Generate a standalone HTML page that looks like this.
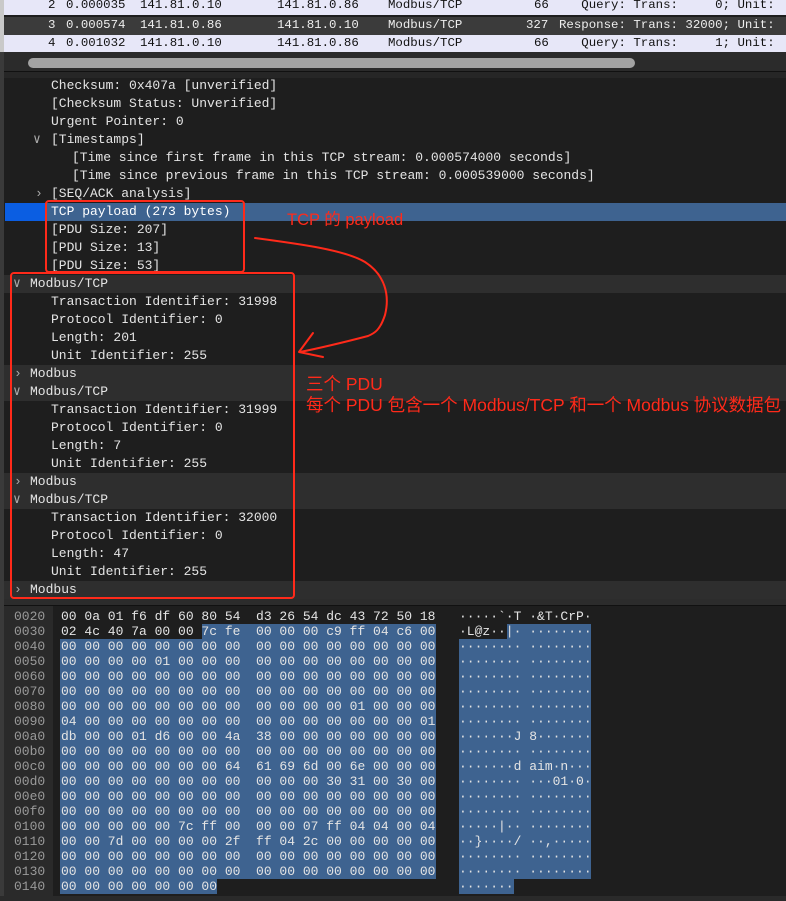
<!DOCTYPE html>
<html><head><meta charset="utf-8">
<style>
*{margin:0;padding:0;box-sizing:border-box}
body{width:786px;height:901px;overflow:hidden;background:#1e1e1e;position:relative;font-family:"Liberation Mono","DejaVu Sans Mono",monospace;font-size:13px;color:#e4e4e4}
.a{position:absolute;white-space:pre;line-height:18px}
.h{position:absolute;white-space:pre;line-height:15px}
.pl{position:absolute;left:0;width:786px;height:17.5px;background:#e7e7f8;color:#111;font-size:12.4px}
.pl span{position:absolute;top:0;line-height:17.5px;white-space:pre}
.row{position:absolute;left:4px;width:782px;height:18px}
.hdr{background:#2e2e2e}
.hx{position:absolute;background:#3e6390}
.cn{font-family:"Liberation Sans","Noto Sans CJK SC",sans-serif;color:#ff2a1a;font-size:16.5px;position:absolute;white-space:pre}
</style></head><body>
<!-- packet list -->
<div class="pl" style="top:-3px"><span style="left:48px">2</span><span style="left:66px">0.000035</span><span style="left:140px">141.81.0.10</span><span style="left:277px">141.81.0.86</span><span style="left:388px">Modbus/TCP</span><span style="left:534px">66</span><span style="left:559px">   Query: Trans:     0; Unit:</span></div>
<div class="pl" style="top:17px;background:#3b3b3b;color:#eee"><span style="left:48px">3</span><span style="left:66px">0.000574</span><span style="left:140px">141.81.0.86</span><span style="left:277px">141.81.0.10</span><span style="left:388px">Modbus/TCP</span><span style="left:526px">327</span><span style="left:559px">Response: Trans: 32000; Unit:</span></div>
<div class="pl" style="top:34.5px"><span style="left:48px">4</span><span style="left:66px">0.001032</span><span style="left:140px">141.81.0.10</span><span style="left:277px">141.81.0.86</span><span style="left:388px">Modbus/TCP</span><span style="left:534px">66</span><span style="left:559px">   Query: Trans:     1; Unit:</span></div>
<div style="position:absolute;left:0;top:0;width:4px;height:52px;background:#c9c9c9"></div>
<div style="position:absolute;left:0;top:52px;width:786px;height:19px;background:#2b2b2b"></div>
<div style="position:absolute;left:28px;top:58px;width:607px;height:10px;border-radius:5px;background:#a3a3a3"></div>
<div style="position:absolute;left:0;top:71px;width:786px;height:7px;background:#262626;border-top:1px solid #111"></div>
<div style="position:absolute;left:0;top:52px;width:4px;height:849px;background:#3a3a3a"></div>

<!-- details -->
<div class="row hdr" style="top:275px"></div>
<div class="row hdr" style="top:365px"></div>
<div class="row hdr" style="top:383px"></div>
<div class="row hdr" style="top:473px"></div>
<div class="row hdr" style="top:491px"></div>
<div class="row hdr" style="top:581px"></div>
<div style="position:absolute;left:5px;top:203px;width:41px;height:18px;background:#0b5ee2"></div>
<div style="position:absolute;left:46px;top:203px;width:740px;height:18px;background:#3e6390"></div>

<div class="a" style="left:51px;top:77px">Checksum: 0x407a [unverified]</div>
<div class="a" style="left:51px;top:95px">[Checksum Status: Unverified]</div>
<div class="a" style="left:51px;top:113px">Urgent Pointer: 0</div>
<div class="a" style="left:33px;top:131px;color:#aaa">∨</div>
<div class="a" style="left:51px;top:131px">[Timestamps]</div>
<div class="a" style="left:72px;top:149px">[Time since first frame in this TCP stream: 0.000574000 seconds]</div>
<div class="a" style="left:72px;top:167px">[Time since previous frame in this TCP stream: 0.000539000 seconds]</div>
<div class="a" style="left:35px;top:185px;color:#aaa">›</div>
<div class="a" style="left:51px;top:185px">[SEQ/ACK analysis]</div>
<div class="a" style="left:51px;top:203px;color:#fff">TCP payload (273 bytes)</div>
<div class="a" style="left:51px;top:221px">[PDU Size: 207]</div>
<div class="a" style="left:51px;top:239px">[PDU Size: 13]</div>
<div class="a" style="left:51px;top:257px">[PDU Size: 53]</div>

<div class="a" style="left:13px;top:275px;color:#aaa">∨</div>
<div class="a" style="left:30px;top:275px">Modbus/TCP</div>
<div class="a" style="left:51px;top:293px">Transaction Identifier: 31998</div>
<div class="a" style="left:51px;top:311px">Protocol Identifier: 0</div>
<div class="a" style="left:51px;top:329px">Length: 201</div>
<div class="a" style="left:51px;top:347px">Unit Identifier: 255</div>
<div class="a" style="left:14px;top:365px;color:#aaa">›</div>
<div class="a" style="left:30px;top:365px">Modbus</div>
<div class="a" style="left:13px;top:383px;color:#aaa">∨</div>
<div class="a" style="left:30px;top:383px">Modbus/TCP</div>
<div class="a" style="left:51px;top:401px">Transaction Identifier: 31999</div>
<div class="a" style="left:51px;top:419px">Protocol Identifier: 0</div>
<div class="a" style="left:51px;top:437px">Length: 7</div>
<div class="a" style="left:51px;top:455px">Unit Identifier: 255</div>
<div class="a" style="left:14px;top:473px;color:#aaa">›</div>
<div class="a" style="left:30px;top:473px">Modbus</div>
<div class="a" style="left:13px;top:491px;color:#aaa">∨</div>
<div class="a" style="left:30px;top:491px">Modbus/TCP</div>
<div class="a" style="left:51px;top:509px">Transaction Identifier: 32000</div>
<div class="a" style="left:51px;top:527px">Protocol Identifier: 0</div>
<div class="a" style="left:51px;top:545px">Length: 47</div>
<div class="a" style="left:51px;top:563px">Unit Identifier: 255</div>
<div class="a" style="left:14px;top:581px;color:#aaa">›</div>
<div class="a" style="left:30px;top:581px">Modbus</div>

<!-- hex pane -->
<div style="position:absolute;left:0;top:599px;width:786px;height:7px;background:#2c2c2c;border-bottom:1px solid #111"></div>
<div style="position:absolute;left:0;top:599px;width:4px;height:302px;background:#3a3a3a"></div>
<div style="position:absolute;left:4px;top:606px;width:49px;height:290px;background:#2a2a2a"></div>
<div style="position:absolute;left:0;top:896px;width:786px;height:5px;background:#2a2a2a"></div>
<div class="hx" style="left:202px;top:623.5px;width:234px;height:15px"></div>
<div class="hx" style="left:60px;top:638.5px;width:376px;height:240px"></div>
<div class="hx" style="left:60px;top:878.5px;width:157px;height:15px"></div>
<div class="hx" style="left:507px;top:623.5px;width:84px;height:15px"></div>
<div class="hx" style="left:459px;top:638.5px;width:132px;height:240px"></div>
<div class="hx" style="left:459px;top:878.5px;width:55px;height:15px"></div>
<div class="h" style="left:14px;top:608.5px;color:#9a9a9a">0020
0030
0040
0050
0060
0070
0080
0090
00a0
00b0
00c0
00d0
00e0
00f0
0100
0110
0120
0130
0140</div>
<div class="h" style="left:61px;top:608.5px">00 0a 01 f6 df 60 80 54  d3 26 54 dc 43 72 50 18
02 4c 40 7a 00 00 7c fe  00 00 00 c9 ff 04 c6 00
00 00 00 00 00 00 00 00  00 00 00 00 00 00 00 00
00 00 00 00 01 00 00 00  00 00 00 00 00 00 00 00
00 00 00 00 00 00 00 00  00 00 00 00 00 00 00 00
00 00 00 00 00 00 00 00  00 00 00 00 00 00 00 00
00 00 00 00 00 00 00 00  00 00 00 00 01 00 00 00
04 00 00 00 00 00 00 00  00 00 00 00 00 00 00 01
db 00 00 01 d6 00 00 4a  38 00 00 00 00 00 00 00
00 00 00 00 00 00 00 00  00 00 00 00 00 00 00 00
00 00 00 00 00 00 00 64  61 69 6d 00 6e 00 00 00
00 00 00 00 00 00 00 00  00 00 00 30 31 00 30 00
00 00 00 00 00 00 00 00  00 00 00 00 00 00 00 00
00 00 00 00 00 00 00 00  00 00 00 00 00 00 00 00
00 00 00 00 00 7c ff 00  00 00 07 ff 04 04 00 04
00 00 7d 00 00 00 00 2f  ff 04 2c 00 00 00 00 00
00 00 00 00 00 00 00 00  00 00 00 00 00 00 00 00
00 00 00 00 00 00 00 00  00 00 00 00 00 00 00 00
00 00 00 00 00 00 00</div>
<div class="h" style="left:459px;top:608.5px">·····`·T ·&amp;T·CrP·
·L@z··|· ········
········ ········
········ ········
········ ········
········ ········
········ ········
········ ········
·······J 8·······
········ ········
·······d aim·n···
········ ···01·0·
········ ········
········ ········
·····|·· ········
··}····/ ··,·····
········ ········
········ ········
·······</div>

<!-- annotations -->
<div style="position:absolute;left:45px;top:200px;width:200px;height:73px;border:2px solid #ff2a1a;border-radius:4px"></div>
<div style="position:absolute;left:10px;top:272px;width:285px;height:327px;border:2px solid #ff2a1a;border-radius:4px"></div>
<svg style="position:absolute;left:0;top:0" width="786" height="901">
<path d="M255 238 C300 244 345 250 365 262 C385 275 390 295 385 315 C380 330 375 333 368 336 C345 342 320 348 300 352" fill="none" stroke="#ff2a1a" stroke-width="2" stroke-linecap="round"/>
<path d="M313 333 L299 352 L323 357" fill="none" stroke="#ff2a1a" stroke-width="2" stroke-linecap="round" stroke-linejoin="round"/>
</svg>
<div class="cn" style="left:287px;top:206px">TCP 的 payload</div>
<div class="cn" style="left:306px;top:374px;font-size:17.5px;line-height:21px">三个 PDU
每个 PDU 包含一个 Modbus/TCP 和一个 Modbus 协议数据包</div>
</body></html>
